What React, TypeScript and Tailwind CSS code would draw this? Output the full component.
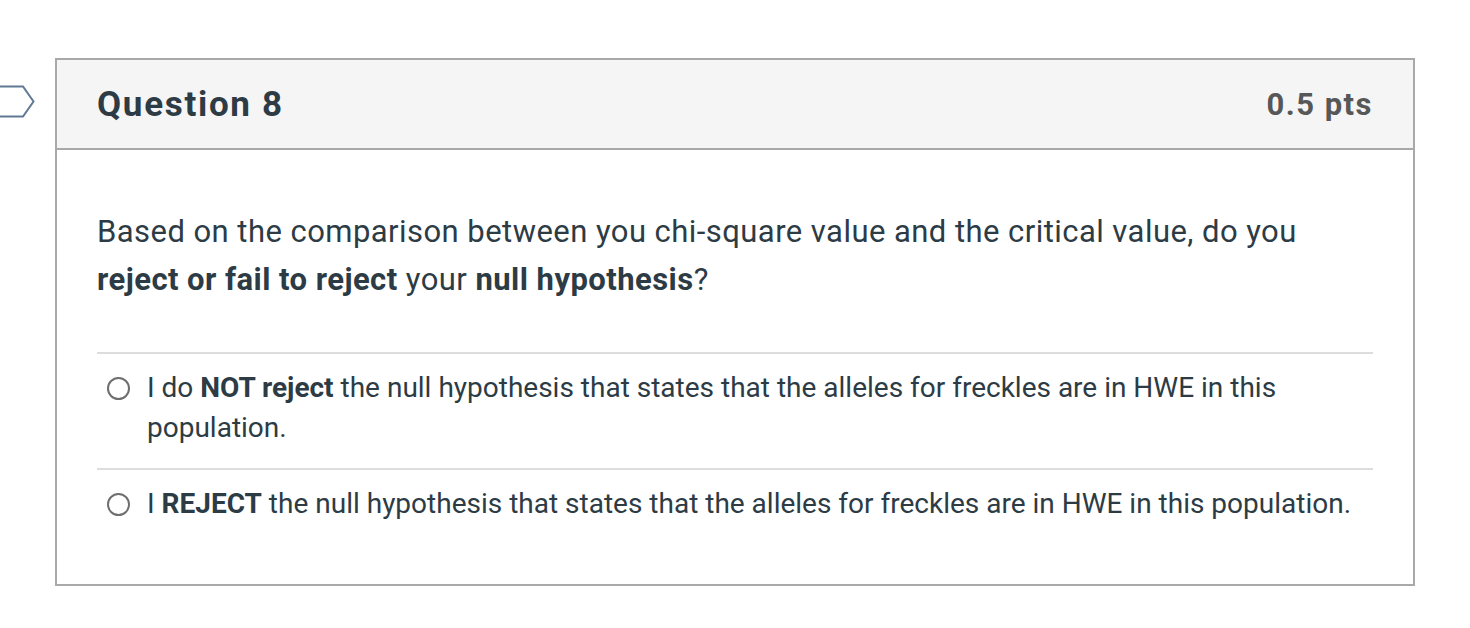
import { useState } from 'react';

const answers = [
  {
    id: 'a1',
    content: (
      <>
        I do <strong className="font-bold">NOT reject</strong> the null hypothesis that states that the alleles for freckles are in HWE in this population.
      </>
    ),
  },
  {
    id: 'a2',
    content: (
      <>
        I <strong className="font-bold">REJECT</strong> the null hypothesis that states that the alleles for freckles are in HWE in this population.
      </>
    ),
  },
];

export default function App() {
  const [selected, setSelected] = useState<string | null>(null);

  return (
    <div className="min-h-screen bg-white pt-[58px] font-['Roboto',sans-serif] text-[#2d3b45]">
      <div className="flex items-start">
        {/* flag marker */}
        <div className="w-[55px] pt-[27px]">
          <svg width="38" height="33" viewBox="0 0 38 33" className="-ml-[2px]">
            <path d="M0 1.5 H25 L35.5 16.5 L25 31.5 H0" fill="white" stroke="#5f7894" strokeWidth="2" strokeLinejoin="miter" />
          </svg>
        </div>

        {/* question card */}
        <div className="w-[1360px] border-2 border-[#a9a9a9]">
          <div className="flex h-[90px] items-center justify-between border-b-2 border-[#a9a9a9] bg-[#f5f5f5] px-[40px]">
            <h2 className="text-[35px] font-bold leading-none tracking-[1.7px]">Question 8</h2>
            <div className="text-[31px] font-bold leading-none tracking-[1.5px] text-[#575757]">0.5 pts</div>
          </div>

          <div className="px-[40px] pt-[58px] pb-[60px]">
            <p className="text-[31px] leading-[48px] tracking-[0.45px]">
              Based on the comparison between you chi-square value and the critical value, do you{' '}
              <strong className="font-bold">reject or fail to reject</strong> your{' '}
              <strong className="font-bold">null hypothesis</strong>?
            </p>

            <div className="mt-[48px]">
              {answers.map((a) => (
                <label
                  key={a.id}
                  className="flex cursor-pointer items-start gap-[17px] border-t-2 border-[#dddddd] pt-[14px] pb-[20px] pl-[10px] last:pb-0"
                  onClick={() => setSelected(a.id)}
                >
                  <span className="mt-[9px] flex h-[23px] w-[23px] shrink-0 items-center justify-center rounded-full border-2 border-[#6e6e6e] bg-white">
                    {selected === a.id && <span className="h-[11px] w-[11px] rounded-full bg-[#2d3b45]" />}
                  </span>
                  <span className="text-[28px] leading-[40px]">{a.content}</span>
                </label>
              ))}
            </div>
          </div>
        </div>
      </div>
    </div>
  );
}
